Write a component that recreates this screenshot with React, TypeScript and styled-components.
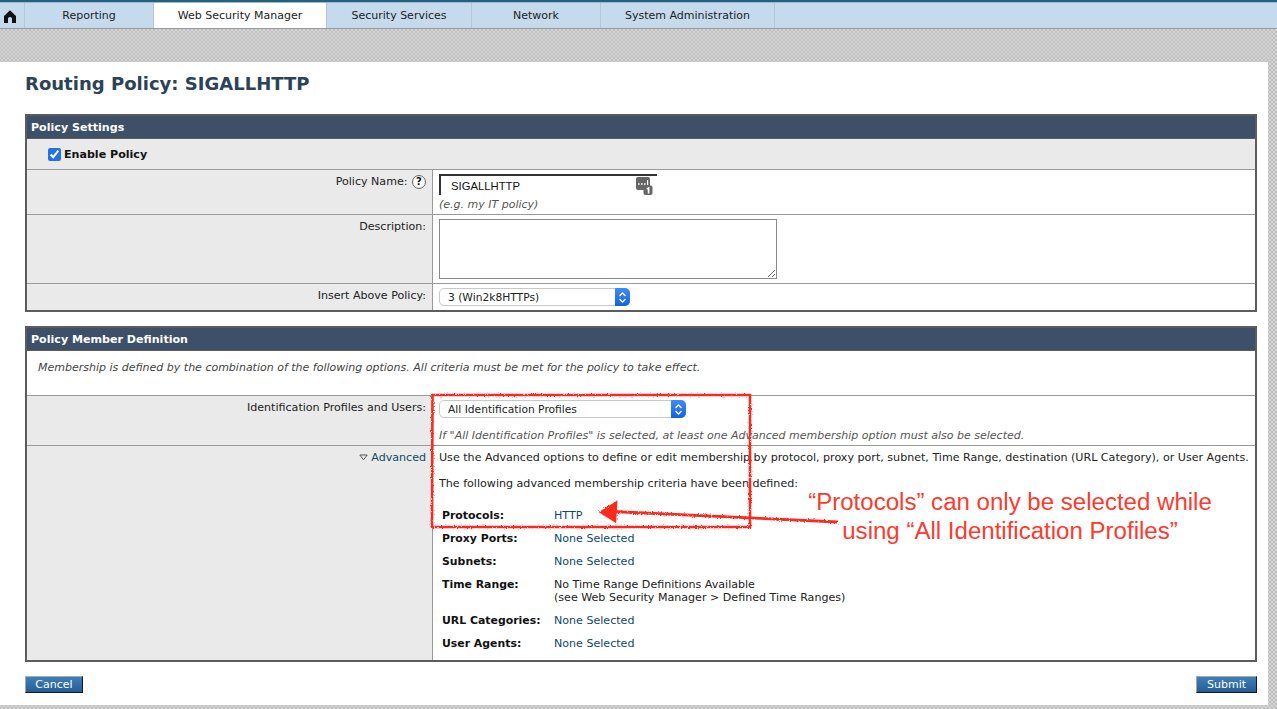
import styled, { createGlobalStyle } from "styled-components";

const GlobalStyle = createGlobalStyle`
  html, body {
    margin: 0;
    padding: 0;
    background: #fff;
  }
  body {
    font-family: "DejaVu Sans", Verdana, sans-serif;
    font-size: 11.08px;
    color: #222;
  }
`;

const tabs = [
  { name: "Reporting", width: 129 },
  { name: "Web Security Manager", width: 173 },
  { name: "Security Services", width: 145 },
  { name: "Network", width: 129 },
  { name: "System Administration", width: 174 },
];

const advancedItems = [
  { label: "Proxy Ports:", value: "None Selected" },
  { label: "Subnets:", value: "None Selected" },
];

const lowerItems = [
  { label: "URL Categories:", value: "None Selected" },
  { label: "User Agents:", value: "None Selected" },
];

const Chevrons = () => (
  <svg width="9" height="13" viewBox="0 0 9 13" fill="none" stroke="#fff" strokeWidth="1.3">
    <path d="M1.5 5 L4.5 2 L7.5 5" />
    <path d="M1.5 8 L4.5 11 L7.5 8" />
  </svg>
);

const Dropdown = ({ value, width }: { value: string; width: number }) => (
  <SelectWrap style={{ width }}>
    <Select defaultValue={value}>
      <option>{value}</option>
    </Select>
    <SelectCap>
      <Chevrons />
    </SelectCap>
  </SelectWrap>
);

export default function App() {
  return (
    <Page>
      <GlobalStyle />
      <TopLine />
      <Nav>
        <HomeCell>
          <svg width="12" height="13" viewBox="0 0 12 13" fill="#111">
            <path d="M6 .2 L12 6 V13 H8 V8.6 Q8 6.9 6 6.9 Q4 6.9 4 8.6 V13 H0 V6 Z" />
          </svg>
        </HomeCell>
        {tabs.map((t, i) => (
          <Tab key={t.name} $active={i === 1} $width={t.width}>
            {t.name}
          </Tab>
        ))}
        <NavRest />
      </Nav>
      <Dotted />
      <Content>
        <Title>Routing Policy: SIGALLHTTP</Title>

        <Panel>
          <PanelHeader>Policy Settings</PanelHeader>
          <EnableRow>
            <input type="checkbox" defaultChecked />
            <b>Enable Policy</b>
          </EnableRow>
          <Row $height={45}>
            <LabelCell>
              Policy Name: <HelpMark>?</HelpMark>
            </LabelCell>
            <ValueCell>
              <NameField>
                <NameInput defaultValue="SIGALLHTTP" />
                <KeyBadge>
                  <svg width="17" height="18" viewBox="0 0 17 18">
                    <rect x="0" y="0" width="14" height="13" rx="2" fill="#666" />
                    <rect x="7.5" y="8.5" width="9" height="9.5" rx="2" fill="#666" />
                    <path d="M2 7h1.6M5 7h1.6M8 7h1.6" stroke="#fff" strokeWidth="1.6" />
                    <path d="M11.6 3v5" stroke="#fff" strokeWidth="1.2" />
                    <path d="M10.8 12 L12.6 11 V16.5" stroke="#fff" strokeWidth="1.6" fill="none" />
                  </svg>
                </KeyBadge>
              </NameField>
              <Hint>(e.g. my IT policy)</Hint>
            </ValueCell>
          </Row>
          <Row $height={69}>
            <LabelCell>Description:</LabelCell>
            <ValueCell>
              <DescriptionBox />
            </ValueCell>
          </Row>
          <Row $height={26} $last>
            <LabelCell>Insert Above Policy:</LabelCell>
            <ValueCell>
              <Dropdown value="3 (Win2k8HTTPs)" width={191} />
            </ValueCell>
          </Row>
        </Panel>

        <Panel>
          <PanelHeader>Policy Member Definition</PanelHeader>
          <IntroRow>
            Membership is defined by the combination of the following options. All criteria must be met for the policy
            to take effect.
          </IntroRow>
          <Row $height={50}>
            <LabelCell>Identification Profiles and Users:</LabelCell>
            <ValueCell>
              <Dropdown value="All Identification Profiles" width={247} />
              <IdentHint>
                If "All Identification Profiles" is selected, at least one Advanced membership option must also be
                selected.
              </IdentHint>
            </ValueCell>
          </Row>
          <Row $height={214} $last>
            <LabelCell>
              <AdvancedToggle>
                <svg width="9" height="7" viewBox="0 0 9 7" fill="none" stroke="#555">
                  <path d="M.8 1 H8.2 L4.5 5.8 Z" />
                </svg>
                <LinkText>Advanced</LinkText>
              </AdvancedToggle>
            </LabelCell>
            <ValueCell>
              <AdvText>
                Use the Advanced options to define or edit membership by protocol, proxy port, subnet, Time Range,
                destination (URL Category), or User Agents.
              </AdvText>
              <AdvText $top={13}>The following advanced membership criteria have been defined:</AdvText>
              <Criteria>
                <CriteriaLabel>Protocols:</CriteriaLabel>
                <LinkText>HTTP</LinkText>
                {advancedItems.map((item) => (
                  <CriteriaPair key={item.label}>
                    <CriteriaLabel>{item.label}</CriteriaLabel>
                    <LinkText>{item.value}</LinkText>
                  </CriteriaPair>
                ))}
                <CriteriaLabel>Time Range:</CriteriaLabel>
                <div>
                  No Time Range Definitions Available
                  <br />
                  (see Web Security Manager &gt; Defined Time Ranges)
                </div>
                {lowerItems.map((item) => (
                  <CriteriaPair key={item.label}>
                    <CriteriaLabel>{item.label}</CriteriaLabel>
                    <LinkText>{item.value}</LinkText>
                  </CriteriaPair>
                ))}
              </Criteria>
            </ValueCell>
          </Row>
        </Panel>

        <Actions>
          <ActionButton $width={58}>Cancel</ActionButton>
          <ActionButton $width={61}>Submit</ActionButton>
        </Actions>
      </Content>
      <BottomStrip />

      <Markup width="1277" height="709" viewBox="0 0 1277 709">
        <defs>
          <filter id="rough" x="-5%" y="-5%" width="110%" height="110%">
            <feTurbulence type="fractalNoise" baseFrequency="0.7" numOctaves="2" seed="4" />
            <feDisplacementMap in="SourceGraphic" scale="3" />
          </filter>
        </defs>
        <g filter="url(#rough)" stroke="#fb2a1c" fill="none" strokeWidth="2.6">
          <path d="M432.5 395 H750 V527 H432 Z" />
          <path d="M612 511.5 L838 522" strokeWidth="2.8" />
          <path d="M601 512 L616 503 L615 521 Z" fill="#fb2a1c" />
        </g>
      </Markup>
      <Callout>
        “Protocols” can only be selected while
        <br />
        using “All Identification Profiles”
      </Callout>
    </Page>
  );
}

// Styled Components

const Page = styled.div`
  position: relative;
  width: 1277px;
  height: 709px;
  overflow: hidden;
  display: flex;
  flex-direction: column;
  background-color: #d4d4d4;
  background-image: radial-gradient(#c0c0c0 0.7px, transparent 0.9px),
    radial-gradient(#c0c0c0 0.7px, transparent 0.9px);
  background-size: 4px 4px;
  background-position: 0 0, 2px 2px;
`;

const TopLine = styled.div`
  height: 2px;
  background: #24607f;
  border-bottom: 1px solid #9fb9cc;
`;

const Nav = styled.div`
  display: flex;
  height: 25px;
  border-bottom: 1px solid #9a9a9a;
  background: #c5daec;
`;

const HomeCell = styled.div`
  width: 24px;
  display: flex;
  align-items: center;
  justify-content: center;
  padding: 2px 4px 0 0;
  box-sizing: border-box;
`;

const Tab = styled.div<{ $active?: boolean; $width: number }>`
  width: ${(p) => p.$width}px;
  box-sizing: border-box;
  display: flex;
  align-items: center;
  justify-content: center;
  font-size: 11px;
  color: #222;
  background: ${(p) => (p.$active ? "#fff" : "#c5daec")};
  border-left: 1px solid #b8c6d1;
`;

const NavRest = styled.div`
  flex: 1;
  border-left: 1px solid #b5c5d2;
`;

const Dotted = styled.div`
  height: 33px;
`;

const Content = styled.div`
  width: 1268px;
  height: 643px;
  box-sizing: border-box;
  padding: 0 11px 0 25px;
  background: #fff;
`;

const Title = styled.h1`
  margin: 0;
  padding-top: 11px;
  height: 52px;
  box-sizing: border-box;
  font-size: 18.05px;
  line-height: 21px;
  font-weight: bold;
  color: #2b4257;
`;

const Panel = styled.div`
  border: 2px solid #5c5c5c;
  margin-bottom: 14px;
`;

const PanelHeader = styled.div`
  height: 23px;
  box-sizing: border-box;
  padding: 0 4px;
  line-height: 23px;
  background: #3d5068;
  color: #fff;
  font-weight: bold;
  border-bottom: 1px solid #5c5c5c;
`;

const EnableRow = styled.div`
  height: 31px;
  box-sizing: border-box;
  padding-left: 21px;
  display: flex;
  align-items: center;
  gap: 3px;
  background: #eaeaea;
  border-bottom: 1px solid #9a9a9a;
  color: #111;
  input {
    margin: 0;
    accent-color: #2470ea;
  }
`;

const Row = styled.div<{ $height: number; $last?: boolean }>`
  display: grid;
  grid-template-columns: 406px 1fr;
  height: ${(p) => p.$height}px;
  box-sizing: border-box;
  border-bottom: ${(p) => (p.$last ? "none" : "1px solid #9a9a9a")};
`;

const LabelCell = styled.div`
  background: #eaeaea;
  border-right: 1px solid #9a9a9a;
  text-align: right;
  padding: 5px 6px 0 0;
  line-height: 13px;
  color: #222;
`;

const ValueCell = styled.div`
  padding: 4px 6px 0 6px;
  line-height: 13px;
  min-width: 0;
`;

const HelpMark = styled.span`
  display: inline-block;
  width: 14px;
  height: 14px;
  margin-left: 1px;
  box-sizing: border-box;
  border: 1px solid #666;
  border-radius: 50%;
  font-size: 10px;
  line-height: 12px;
  font-weight: bold;
  text-align: center;
  color: #111;
  box-shadow: inset 0 0 0 1px #eee;
  background: #fff;
`;

const NameField = styled.div`
  position: relative;
  width: 218px;
  height: 21px;
`;

const NameInput = styled.input`
  width: 100%;
  height: 100%;
  box-sizing: border-box;
  border: none;
  border-top: 2px solid #333;
  border-left: 2px solid #333;
  padding: 0 0 0 10px;
  font-family: "Liberation Sans", Arial, sans-serif;
  font-size: 11.3px;
  color: #111;
  outline: none;
`;

const KeyBadge = styled.div`
  position: absolute;
  left: 197px;
  top: 3px;
  height: 18px;
`;

const Hint = styled.div`
  margin-top: 3px;
  font-size: 11px;
  font-style: italic;
  color: #555;
`;

const IdentHint = styled(Hint)`
  margin-top: 11px;
  white-space: nowrap;
`;

const DescriptionBox = styled.textarea`
  display: block;
  width: 338px;
  height: 60px;
  box-sizing: border-box;
  border: 1px solid #8a8a8a;
  padding: 2px;
  margin: 0;
`;

const SelectWrap = styled.div`
  position: relative;
  height: 18px;
`;

const Select = styled.select`
  appearance: none;
  width: 100%;
  height: 100%;
  box-sizing: border-box;
  border: 1px solid #c8c8c8;
  border-radius: 5px;
  background: #fff;
  padding: 0 0 0 8px;
  font-family: "DejaVu Sans", Verdana, sans-serif;
  font-size: 10.7px;
  color: #222;
`;

const SelectCap = styled.div`
  position: absolute;
  top: 0;
  right: 0;
  bottom: 0;
  width: 15px;
  display: flex;
  align-items: center;
  justify-content: center;
  border-radius: 0 5px 5px 0;
  background: linear-gradient(#3f8cf6, #1660e0);
  pointer-events: none;
`;

const IntroRow = styled.div`
  height: 45px;
  box-sizing: border-box;
  padding: 10px 11px 0;
  font-size: 11px;
  line-height: 13px;
  font-style: italic;
  color: #444;
  border-bottom: 1px solid #9a9a9a;
`;

const AdvancedToggle = styled.span`
  display: inline-flex;
  align-items: center;
  gap: 3px;
`;

const LinkText = styled.span`
  color: #0f4a64;
`;

const AdvText = styled.div<{ $top?: number }>`
  margin-top: ${(p) => p.$top ?? 1}px;
  font-size: 11.1px;
  white-space: nowrap;
  color: #222;
`;

const Criteria = styled.div`
  display: grid;
  grid-template-columns: 112px 1fr;
  row-gap: 10px;
  margin: 19px 0 0 3px;
  color: #222;
`;

const CriteriaPair = styled.div`
  display: contents;
`;

const CriteriaLabel = styled.div`
  font-size: 10.9px;
  font-weight: bold;
  color: #111;
`;

const Actions = styled.div`
  display: flex;
  justify-content: space-between;
`;

const ActionButton = styled.button<{ $width: number }>`
  width: ${(p) => p.$width}px;
  height: 17px;
  padding: 1px 0 0;
  box-sizing: border-box;
  border: 1px solid;
  border-color: #a8a8a8 #0c1a2a #0c1a2a #a8a8a8;
  background: linear-gradient(#3f7fbb, #265d90);
  color: #fff;
  font-family: "DejaVu Sans", Verdana, sans-serif;
  font-size: 11px;
  line-height: 14px;
`;

const BottomStrip = styled.div`
  flex: 1;
`;

const Markup = styled.svg`
  position: absolute;
  left: 0;
  top: 0;
  pointer-events: none;
`;

const Callout = styled.div`
  position: absolute;
  left: 790px;
  top: 487px;
  width: 440px;
  text-align: center;
  font-family: "Liberation Sans", Arial, sans-serif;
  font-size: 24.05px;
  line-height: 29px;
  color: #fb3b30;
`;
